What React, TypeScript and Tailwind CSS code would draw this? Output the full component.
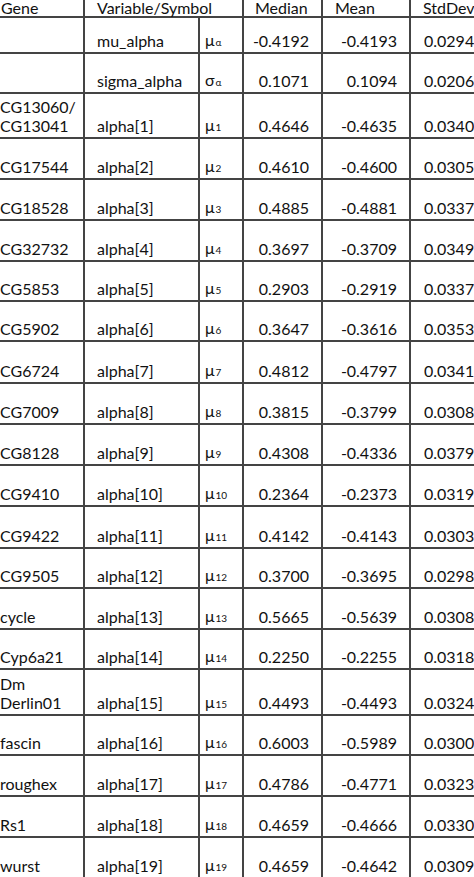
import React from "react";

type Row = {
  gene: string[];
  variable: string;
  sym: string;
  sub: string;
  median: string;
  mean: string;
  sd: string;
  h: string;
};

const rows: Row[] = [
  { gene: [""], variable: "mu_alpha", sym: "μ", sub: "α", median: "-0.4192", mean: "-0.4193", sd: "0.0294", h: "h-[36px]" },
  { gene: [""], variable: "sigma_alpha", sym: "σ", sub: "α", median: "0.1071", mean: "0.1094", sd: "0.0206", h: "h-[40px]" },
  { gene: ["CG13060/", "CG13041"], variable: "alpha[1]", sym: "μ", sub: "1", median: "0.4646", mean: "-0.4635", sd: "0.0340", h: "h-[45px]" },
  { gene: ["CG17544"], variable: "alpha[2]", sym: "μ", sub: "2", median: "0.4610", mean: "-0.4600", sd: "0.0305", h: "h-[41px]" },
  { gene: ["CG18528"], variable: "alpha[3]", sym: "μ", sub: "3", median: "0.4885", mean: "-0.4881", sd: "0.0337", h: "h-[41px]" },
  { gene: ["CG32732"], variable: "alpha[4]", sym: "μ", sub: "4", median: "0.3697", mean: "-0.3709", sd: "0.0349", h: "h-[41px]" },
  { gene: ["CG5853"], variable: "alpha[5]", sym: "μ", sub: "5", median: "0.2903", mean: "-0.2919", sd: "0.0337", h: "h-[40px]" },
  { gene: ["CG5902"], variable: "alpha[6]", sym: "μ", sub: "6", median: "0.3647", mean: "-0.3616", sd: "0.0353", h: "h-[40px]" },
  { gene: ["CG6724"], variable: "alpha[7]", sym: "μ", sub: "7", median: "0.4812", mean: "-0.4797", sd: "0.0341", h: "h-[42px]" },
  { gene: ["CG7009"], variable: "alpha[8]", sym: "μ", sub: "8", median: "0.3815", mean: "-0.3799", sd: "0.0308", h: "h-[41px]" },
  { gene: ["CG8128"], variable: "alpha[9]", sym: "μ", sub: "9", median: "0.4308", mean: "-0.4336", sd: "0.0379", h: "h-[41px]" },
  { gene: ["CG9410"], variable: "alpha[10]", sym: "μ", sub: "10", median: "0.2364", mean: "-0.2373", sd: "0.0319", h: "h-[41px]" },
  { gene: ["CG9422"], variable: "alpha[11]", sym: "μ", sub: "11", median: "0.4142", mean: "-0.4143", sd: "0.0303", h: "h-[42px]" },
  { gene: ["CG9505"], variable: "alpha[12]", sym: "μ", sub: "12", median: "0.3700", mean: "-0.3695", sd: "0.0298", h: "h-[40px]" },
  { gene: ["cycle"], variable: "alpha[13]", sym: "μ", sub: "13", median: "0.5665", mean: "-0.5639", sd: "0.0308", h: "h-[41px]" },
  { gene: ["Cyp6a21"], variable: "alpha[14]", sym: "μ", sub: "14", median: "0.2250", mean: "-0.2255", sd: "0.0318", h: "h-[40px]" },
  { gene: ["Dm", "Derlin01"], variable: "alpha[15]", sym: "μ", sub: "15", median: "0.4493", mean: "-0.4493", sd: "0.0324", h: "h-[46px]" },
  { gene: ["fascin"], variable: "alpha[16]", sym: "μ", sub: "16", median: "0.6003", mean: "-0.5989", sd: "0.0300", h: "h-[40px]" },
  { gene: ["roughex"], variable: "alpha[17]", sym: "μ", sub: "17", median: "0.4786", mean: "-0.4771", sd: "0.0323", h: "h-[41px]" },
  { gene: ["Rs1"], variable: "alpha[18]", sym: "μ", sub: "18", median: "0.4659", mean: "-0.4666", sd: "0.0330", h: "h-[41px]" },
  { gene: ["wurst"], variable: "alpha[19]", sym: "μ", sub: "19", median: "0.4659", mean: "-0.4642", sd: "0.0309", h: "h-[41px]" },
];

const cell = "flex flex-col justify-end border-r-2 border-[#444]";
const head = "flex items-start border-r-2 border-[#444] leading-[16px]";

export default function App() {
  return (
    <div
      className="w-[474px] h-[877px] overflow-hidden bg-white text-[#111] text-[16px] leading-[19px]"
      style={{ fontFamily: "Lato, 'Open Sans', sans-serif" }}
    >
      <div className="w-[560px]">
        {/* header */}
        <div className="flex h-[18px] border-b-2 border-[#444]">
          <div className={`${head} w-[85px] pl-[1px]`}>Gene</div>
          <div className={`${head} w-[159px] pl-[12px]`}>Variable/Symbol</div>
          <div className={`${head} w-[79px] pl-[11px]`}>Median</div>
          <div className={`${head} w-[88px] pl-[12px]`}>Mean</div>
          <div className={`${head} w-[120px] pl-[12px]`}>StdDev</div>
        </div>

        {rows.map((r, i) => (
          <div key={i} className={`flex border-b-2 border-[#444] ${r.h}`}>
            <div className={`${cell} w-[85px] pl-0 pb-[2px]`}>
              {r.gene.map((g, j) => (
                <span key={j}>{g}</span>
              ))}
            </div>
            <div className={`${cell} w-[115px] pl-[12px] pb-[2px]`}>{r.variable}</div>
            <div className={`${cell} w-[44px] pl-[5px] pb-0`}>
              <span className="text-[16px]">
                {r.sym}
                <span className="text-[10px] ml-[1px]">{r.sub}</span>
              </span>
            </div>
            <div className={`${cell} w-[79px] pr-[12px] pb-[2px] items-end`}>{r.median}</div>
            <div className={`${cell} w-[88px] pr-[12px] pb-[2px] items-end`}>{r.mean}</div>
            <div className={`${cell} w-[120px] pl-[13px] pb-[2px]`}>{r.sd}</div>
          </div>
        ))}
      </div>
    </div>
  );
}
